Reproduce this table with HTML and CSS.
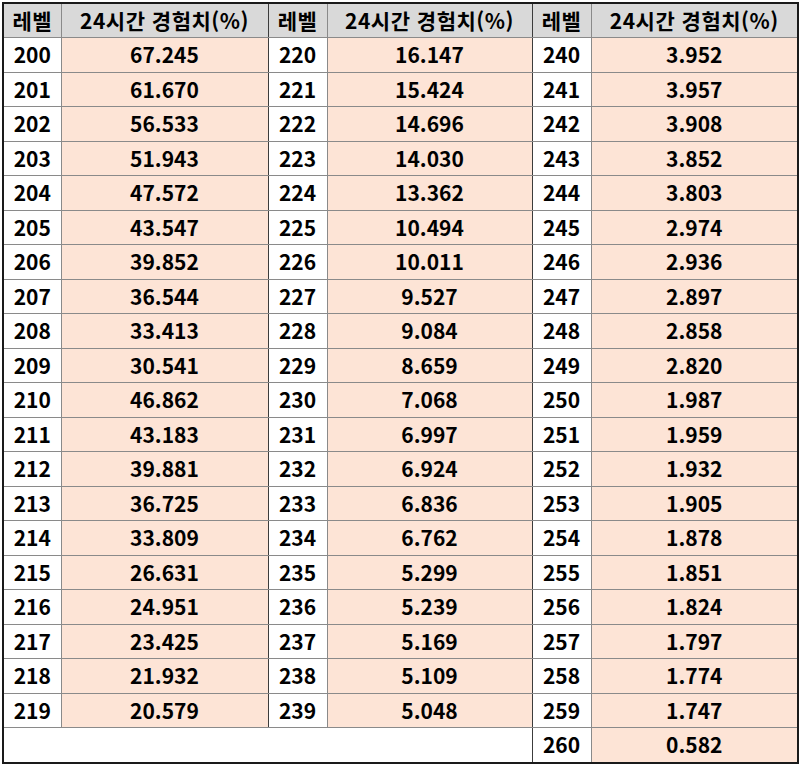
FILE: index.html
```html
<!DOCTYPE html>
<html lang="ko">
<head>
<meta charset="utf-8">
<link rel="stylesheet" href="styles.css">
</head>
<body>
<table class="exp">
<colgroup>
<col class="c-lv1"><col class="c-val1"><col class="c-lv2"><col class="c-val2"><col class="c-lv3"><col class="c-val3">
</colgroup>
<thead>
<tr>
<th>레벨</th><th class="grp">24시간 경험치(%)</th>
<th>레벨</th><th class="grp">24시간 경험치(%)</th>
<th>레벨</th><th>24시간 경험치(%)</th>
</tr>
</thead>
<tbody>
<tr><td class="lv">200</td><td class="val grp">67.245</td><td class="lv">220</td><td class="val grp">16.147</td><td class="lv">240</td><td class="val">3.952</td></tr>
<tr><td class="lv">201</td><td class="val grp">61.670</td><td class="lv">221</td><td class="val grp">15.424</td><td class="lv">241</td><td class="val">3.957</td></tr>
<tr><td class="lv">202</td><td class="val grp">56.533</td><td class="lv">222</td><td class="val grp">14.696</td><td class="lv">242</td><td class="val">3.908</td></tr>
<tr><td class="lv">203</td><td class="val grp">51.943</td><td class="lv">223</td><td class="val grp">14.030</td><td class="lv">243</td><td class="val">3.852</td></tr>
<tr><td class="lv">204</td><td class="val grp">47.572</td><td class="lv">224</td><td class="val grp">13.362</td><td class="lv">244</td><td class="val">3.803</td></tr>
<tr><td class="lv">205</td><td class="val grp">43.547</td><td class="lv">225</td><td class="val grp">10.494</td><td class="lv">245</td><td class="val">2.974</td></tr>
<tr><td class="lv">206</td><td class="val grp">39.852</td><td class="lv">226</td><td class="val grp">10.011</td><td class="lv">246</td><td class="val">2.936</td></tr>
<tr><td class="lv">207</td><td class="val grp">36.544</td><td class="lv">227</td><td class="val grp">9.527</td><td class="lv">247</td><td class="val">2.897</td></tr>
<tr><td class="lv">208</td><td class="val grp">33.413</td><td class="lv">228</td><td class="val grp">9.084</td><td class="lv">248</td><td class="val">2.858</td></tr>
<tr><td class="lv">209</td><td class="val grp">30.541</td><td class="lv">229</td><td class="val grp">8.659</td><td class="lv">249</td><td class="val">2.820</td></tr>
<tr><td class="lv">210</td><td class="val grp">46.862</td><td class="lv">230</td><td class="val grp">7.068</td><td class="lv">250</td><td class="val">1.987</td></tr>
<tr><td class="lv">211</td><td class="val grp">43.183</td><td class="lv">231</td><td class="val grp">6.997</td><td class="lv">251</td><td class="val">1.959</td></tr>
<tr><td class="lv">212</td><td class="val grp">39.881</td><td class="lv">232</td><td class="val grp">6.924</td><td class="lv">252</td><td class="val">1.932</td></tr>
<tr><td class="lv">213</td><td class="val grp">36.725</td><td class="lv">233</td><td class="val grp">6.836</td><td class="lv">253</td><td class="val">1.905</td></tr>
<tr><td class="lv">214</td><td class="val grp">33.809</td><td class="lv">234</td><td class="val grp">6.762</td><td class="lv">254</td><td class="val">1.878</td></tr>
<tr><td class="lv">215</td><td class="val grp">26.631</td><td class="lv">235</td><td class="val grp">5.299</td><td class="lv">255</td><td class="val">1.851</td></tr>
<tr><td class="lv">216</td><td class="val grp">24.951</td><td class="lv">236</td><td class="val grp">5.239</td><td class="lv">256</td><td class="val">1.824</td></tr>
<tr><td class="lv">217</td><td class="val grp">23.425</td><td class="lv">237</td><td class="val grp">5.169</td><td class="lv">257</td><td class="val">1.797</td></tr>
<tr><td class="lv">218</td><td class="val grp">21.932</td><td class="lv">238</td><td class="val grp">5.109</td><td class="lv">258</td><td class="val">1.774</td></tr>
<tr><td class="lv">219</td><td class="val grp">20.579</td><td class="lv">239</td><td class="val grp">5.048</td><td class="lv">259</td><td class="val">1.747</td></tr>
<tr class="last"><td class="empty grp" colspan="4"></td><td class="lv">260</td><td class="val">0.582</td></tr>
</tbody>
</table>
</body>
</html>
```
FILE: styles.css
```css
html, body {
  margin: 0;
  padding: 0;
  background: #ffffff;
}
body {
  padding: 2px 0 0 2px;
}
.exp {
  border-collapse: collapse;
  table-layout: fixed;
  width: 795px;
  border: 2px solid #1a1a1a;
  font-family: "Noto Sans CJK KR", "Noto Sans", sans-serif;
  font-weight: 700;
  font-size: 21px;
  color: #000;
}
.c-lv1 { width: 58px; }
.c-val1 { width: 207px; }
.c-lv2 { width: 59px; }
.c-val2 { width: 205px; }
.c-lv3 { width: 59px; }
.c-val3 { width: 207px; }
.exp th, .exp td {
  height: 33.5px;
  padding: 0;
  text-align: center;
  vertical-align: middle;
  border: 1px solid #8a8a8a;
  line-height: 1;
  white-space: nowrap;
  overflow: hidden;
}
.exp th {
  background: #d9d9d9;
  font-weight: 700;
  height: 33px;
  letter-spacing: 0.5px;
}
.exp td.lv {
  background: #ffffff;
}
.exp td.val {
  background: #fde4d6;
}
.exp .grp {
  border-right: 1px solid #3c3c3c;
}
.exp td.empty {
  background: #ffffff;
}
```
